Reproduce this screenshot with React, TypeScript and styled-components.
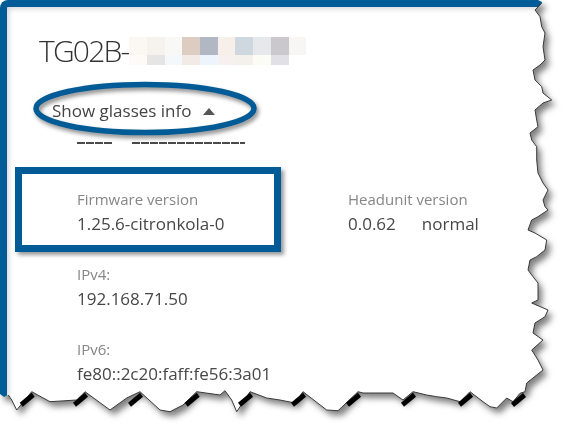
import React from 'react';
import styled, { createGlobalStyle } from 'styled-components';

const GlobalStyle = createGlobalStyle`
  html, body {
    margin: 0;
    padding: 0;
    background: #ffffff;
  }
  body {
    font-family: "Open Sans", "Noto Sans", sans-serif;
  }
`;

const BLUE = '#005b96';

type Pt = [number, number];

// torn paper edge, traced from the screenshot
const rightEdge: Pt[] = [
  [541.7, 3.3], [535, 10], [540, 16.7], [541.7, 26.7], [545, 33], [543, 46.7],
  [545, 60], [540, 65], [533, 70], [535, 80], [541.7, 86.7], [543, 93],
  [551.7, 100], [543, 103], [535, 110], [536.7, 120], [538, 126.7], [530, 133],
  [531.7, 140], [536.7, 146.7], [536.7, 160], [538, 173], [543, 183], [548, 190],
  [543, 200], [545, 206.7], [548, 210], [538, 216.7], [531.7, 220], [528, 230],
  [535, 233], [546.7, 240], [545, 250], [536.7, 256.7], [530, 260], [528, 270],
  [533, 276.7], [538, 283], [538, 300], [531.7, 303], [548, 310], [545, 316.7],
  [535, 323], [533, 333], [543, 340], [531.7, 350], [538, 360], [543, 370],
  [526.7, 383], [525, 391.7],
];

const bottomEdge: Pt[] = [
  [520, 393.3], [513, 401.7], [506.7, 398], [496.7, 408], [490, 406.7], [483, 401.7],
  [470, 391.7], [460, 401.7], [446.7, 398], [436.7, 396.7], [426.7, 395], [413, 391.7],
  [403, 400], [393, 393], [363, 393], [358, 391.7], [338, 410.7], [326.7, 410],
  [303, 391.7], [295, 403], [280, 400], [266.7, 398], [250, 391.7], [236.7, 411.7],
  [231.7, 400], [225, 390.7], [220, 395], [196.7, 391.7], [183, 405], [170, 411.7],
  [160, 410], [140, 391.7], [126.7, 398], [110, 410], [85, 391.7], [76.7, 400],
  [50, 401.7], [31.7, 391.7], [16.7, 410], [11.7, 400], [8.3, 395],
];

const peaks: Pt[] = [
  [31.7, 391.7], [85, 391.7], [140, 391.7], [196.7, 391.7], [250, 391.7],
  [303, 391.7], [358, 391.7], [413, 391.7], [470, 391.7], [523, 392],
];

const edge = [...rightEdge, ...bottomEdge];
const clipShape = `polygon(0px 0px, 538px 0px, 542px 2px, ${edge
  .map(([x, y]) => `${x}px ${y}px`)
  .join(', ')}, 4px 397px, 0px 394px)`;

const redactTop = [
  '#fbf7f3', '#f6f2ee', '#f8f8f7', '#dcccc1', '#b1b7c3',
  '#f6efea', '#cfd7df', '#e7e8eb', '#cac8cd', '#f7f6f4',
];
const redactBottom = [
  '#fdfaf7', '#e5e5e5', '#f5f8fb', '#f2ebe5', '#edf4fb',
  '#f6f1ee', '#f4f1ed', '#fcfcf6', '#e0e0e6', '#ffffff',
];

const Page = styled.div`
  position: relative;
  width: 580px;
  height: 446px;
  overflow: hidden;
  background: #ffffff;
`;

const Sheet = styled.div`
  filter: drop-shadow(4px 5px 3px rgba(0, 0, 0, 0.5));
`;

const Window = styled.div`
  box-sizing: border-box;
  width: 552px;
  height: 412px;
  padding: 26px 0 0 32px;
  background: #ffffff;
  border-top: 7px solid ${BLUE};
  border-left: 7px solid ${BLUE};
  border-top-left-radius: 8px;
  box-shadow: inset 4px 4px 5px -2px rgba(0, 0, 0, 0.16);
  clip-path: ${clipShape};
`;

const Title = styled.div`
  display: flex;
  align-items: flex-start;
  height: 36px;
  font-size: 30px;
  line-height: 36px;
  font-weight: 300;
  letter-spacing: -1.8px;
  color: #333333;
`;

const Redacted = styled.div`
  display: grid;
  grid-template-columns: repeat(10, 17.7px);
  grid-template-rows: 17.7px 10px;
  margin: 4px 0 0 1px;
`;

const Pixel = styled.span<{ $c: string }>`
  background: ${(p) => p.$c};
`;

const Toggle = styled.div`
  margin-top: 30px;
  padding-left: 13px;
  font-size: 17px;
  line-height: 24px;
  color: #444444;
`;

const Caret = styled.span`
  display: inline-block;
  width: 0;
  height: 0;
  margin-left: 12px;
  vertical-align: 2px;
  border-left: 6px solid transparent;
  border-right: 6px solid transparent;
  border-bottom: 7px solid #555555;
`;

/* the top sliver of a line that is hidden in the screenshot */
const CutLine = styled.div`
  display: flex;
  align-items: flex-start;
  gap: 19px;
  height: 3px;
  margin: 19px 0 0 38px;
`;

const Sliver = styled.span<{ $w: number }>`
  width: ${(p) => p.$w}px;
  height: 1.5px;
  background: repeating-linear-gradient(
    90deg,
    #4a4a4a 0 8px,
    transparent 8px 9px
  );
`;

const InfoGrid = styled.div`
  display: grid;
  grid-template-columns: 271px auto;
  row-gap: 25px;
  margin: 44px 0 0 38px;
`;

const Field = styled.div<{ $wide?: boolean }>`
  display: flex;
  flex-direction: column;
  grid-column: ${(p) => (p.$wide ? '1 / span 2' : 'auto')};
`;

const Label = styled.span`
  font-size: 15px;
  line-height: 20px;
  color: #868686;
`;

const Value = styled.span`
  font-size: 17px;
  line-height: 30px;
  color: #474747;
`;

const Mode = styled.span`
  margin-left: 26px;
`;

const EdgeDrawing = styled.svg`
  position: absolute;
  left: 0;
  top: 0;
  pointer-events: none;
`;

const Ellipse = styled.svg`
  position: absolute;
  left: 30px;
  top: 79px;
  overflow: visible;
  filter: drop-shadow(2px 3px 2px rgba(0, 0, 0, 0.45));
  pointer-events: none;
`;

const Box = styled.div`
  position: absolute;
  left: 15px;
  top: 167px;
  width: 266px;
  height: 85px;
  box-sizing: border-box;
  border: 7px solid ${BLUE};
  box-shadow: 3px 3px 4px rgba(0, 0, 0, 0.4);
  pointer-events: none;
`;

const fields = [
  { label: 'Firmware version', value: '1.25.6-citronkola-0' },
  { label: 'Headunit version', value: '0.0.62', mode: 'normal' },
  { label: 'IPv4:', value: '192.168.71.50', wide: true },
  { label: 'IPv6:', value: 'fe80::2c20:faff:fe56:3a01', wide: true },
];

export default function App() {
  return (
    <>
      <GlobalStyle />
      <Page>
        <Sheet>
          <Window>
            <Title>
              TG02B-
              <Redacted>
                {redactTop.map((c, i) => (
                  <Pixel key={`t${i}`} $c={c} />
                ))}
                {redactBottom.map((c, i) => (
                  <Pixel key={`b${i}`} $c={c} />
                ))}
              </Redacted>
            </Title>
            <Toggle>
              Show glasses info
              <Caret />
            </Toggle>
            <CutLine>
              <Sliver $w={36} />
              <Sliver $w={113} />
            </CutLine>
            <InfoGrid>
              {fields.map((f) => (
                <Field key={f.label} $wide={f.wide}>
                  <Label>{f.label}</Label>
                  <Value>
                    {f.value}
                    {f.mode && <Mode>{f.mode}</Mode>}
                  </Value>
                </Field>
              ))}
            </InfoGrid>
          </Window>
        </Sheet>

        <EdgeDrawing width="580" height="446" viewBox="0 0 580 446">
          <polyline
            points={edge.map(([x, y]) => `${x},${y}`).join(' ')}
            fill="none"
            stroke="#3a3a3a"
            strokeWidth="1"
          />
          {peaks.map(([x, y]) => (
            <polygon
              key={x}
              points={`${x},${y + 1} ${x + 3},${y + 5} ${x - 9},${y + 15} ${x - 12},${y + 11}`}
              fill="#000000"
            />
          ))}
        </EdgeDrawing>

        <Ellipse width="232" height="62" viewBox="0 0 232 62">
          <ellipse cx="115" cy="29.5" rx="109" ry="24" fill="none" stroke={BLUE} strokeWidth="5.5" />
        </Ellipse>

        <Box />
      </Page>
    </>
  );
}
